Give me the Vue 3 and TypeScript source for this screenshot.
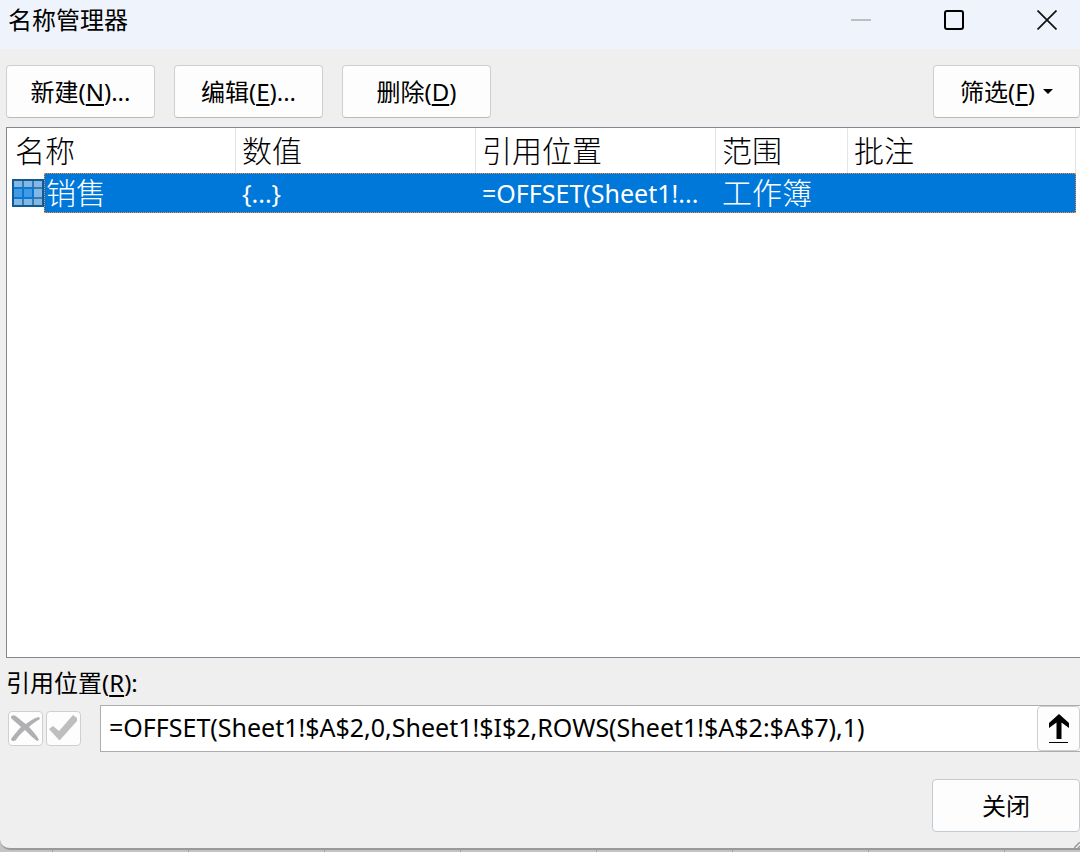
<script setup lang="ts">
import { ref } from 'vue'

interface DefinedName {
  name: string
  value: string
  refersTo: string
  scope: string
  comment: string
}

interface Action {
  label: string
  key: string
  tail: string
}

const actions: Action[] = [
  { label: '新建', key: 'N', tail: ')...' },
  { label: '编辑', key: 'E', tail: ')...' },
  { label: '删除', key: 'D', tail: ')' },
]

const names: DefinedName[] = [
  { name: '销售', value: '{...}', refersTo: '=OFFSET(Sheet1!...', scope: '工作簿', comment: '' },
]

const formula = ref('=OFFSET(Sheet1!$A$2,0,Sheet1!$I$2,ROWS(Sheet1!$A$2:$A$7),1)')
</script>

<template>
  <div class="desktop">
    <main class="dialog">
      <header class="titlebar">
        <h1>名称管理器</h1>
        <div class="window-controls">
          <button type="button" aria-label="最小化" disabled>
            <svg width="20" height="20" viewBox="0 0 20 20"><path d="M0 10H20" stroke="#bdbec1" stroke-width="2" /></svg>
          </button>
          <button type="button" aria-label="最大化">
            <svg width="20" height="20" viewBox="0 0 20 20"><rect x="1" y="1" width="18" height="18" rx="2" fill="none" stroke="#000" stroke-width="2" /></svg>
          </button>
          <button type="button" aria-label="关闭窗口">
            <svg width="20" height="20" viewBox="0 0 20 20"><path d="M0.500 0.500L19.500 19.500M19.500 0.500L0.500 19.500" stroke="#111" stroke-width="1.700" /></svg>
          </button>
        </div>
      </header>

      <div class="toolbar">
        <button v-for="a in actions" :key="a.key" type="button" class="btn">
          <span>{{ a.label }}(<u>{{ a.key }}</u>{{ a.tail }}</span>
        </button>
        <button type="button" class="btn filter">
          <span>筛选(<u>F</u>)</span>
          <svg width="10" height="5" viewBox="0 0 10 5"><path d="M0 0H10L5 5Z" fill="#000" /></svg>
        </button>
      </div>

      <div class="list">
        <table>
          <colgroup>
            <col class="c-icon" /><col class="c-name" /><col class="c-wide" /><col class="c-wide" /><col class="c-scope" /><col />
          </colgroup>
          <thead>
            <tr>
              <th colspan="2" scope="col">名称</th>
              <th scope="col">数值</th>
              <th scope="col">引用位置</th>
              <th scope="col">范围</th>
              <th scope="col">批注</th>
            </tr>
          </thead>
          <tbody>
            <tr v-for="n in names" :key="n.name">
              <td class="icon-cell">
                <svg width="32" height="28" viewBox="0 0 32 28">
                  <rect width="32" height="28" fill="#145a92" />
                  <rect x="2" y="2" width="30" height="24" fill="#3b78ac" />
                  <rect x="2" y="8" width="20" height="12" fill="#0878d2" />
                  <g fill="#82b8e8">
                    <rect x="2" y="2" width="8" height="6" /><rect x="12" y="2" width="8" height="6" /><rect x="22" y="2" width="8" height="6" />
                    <rect x="22" y="10" width="8" height="8" />
                    <rect x="2" y="20" width="8" height="6" /><rect x="12" y="20" width="8" height="6" /><rect x="22" y="20" width="8" height="6" />
                  </g>
                  <path d="M2 10H10V18H2ZM12 10H20V18H12Z" fill="#429be2" />
                  <path d="M31 0V28" stroke="#145a92" stroke-width="2" />
                </svg>
              </td>
              <td class="name">{{ n.name }}</td>
              <td class="latin">{{ n.value }}</td>
              <td class="latin">{{ n.refersTo }}</td>
              <td>{{ n.scope }}</td>
              <td>{{ n.comment }}</td>
            </tr>
          </tbody>
        </table>
      </div>

      <label class="ref-label" for="refers-to">引用位置(<u>R</u>):</label>
      <div class="ref-row">
        <button type="button" class="mini" aria-label="取消" disabled>
          <svg width="33" height="33" viewBox="0 0 33 33">
            <path d="M2 6C2 2 6 3 8 5C12 8 15 11 17 12C21 9 25 6 30 5L31 7C27 9 23 12 20 15C24 19 28 24 30 28L28 29C24 26 20 22 16 18C12 21 9 25 7 28C5 30 2 29 2 27C5 23 9 18 12 15C9 12 5 9 2 6Z" fill="#b0b0b2" />
          </svg>
        </button>
        <button type="button" class="mini" aria-label="输入" disabled>
          <svg width="33" height="33" viewBox="0 0 33 33">
            <path d="M2 17L6 14L12 19L26 3L30 6V9L13 28H12Z" fill="#bebec0" />
          </svg>
        </button>
        <div class="formula">
          <input id="refers-to" v-model="formula" type="text" spellcheck="false" />
          <button type="button" class="collapse" aria-label="折叠对话框">
            <svg width="20" height="30" viewBox="0 0 20 30">
              <path d="M10 0L20 9V14L12.500 8.500V25H7.500V8.500L0 14V9Z" fill="#000" />
              <path d="M0 28.500H19" stroke="#000" stroke-width="1" />
            </svg>
          </button>
        </div>
      </div>

      <footer>
        <button type="button" class="btn">关闭</button>
        <svg class="grip" width="6" height="6" viewBox="0 0 6 6"><path d="M0 6L6 0M4 6L6 4" stroke="#999" stroke-width="1.500" /></svg>
      </footer>
    </main>
    <div class="sheet-edge"></div>
  </div>
</template>

<style>
body {
  margin: 0;
}
</style>

<style scoped>
* {
  box-sizing: border-box;
}

.desktop {
  display: flex;
  flex-direction: column;
  min-height: 100vh;
  background: #c4c4c4;
  color: #000;
  font-family: "Noto Sans", "Noto Sans CJK SC", sans-serif;
  font-size: 24px;
  line-height: 32px;
}

.dialog {
  position: relative;
  z-index: 1;
  flex: 1;
  display: flex;
  flex-direction: column;
  background: #efefef;
  border-bottom: 2px solid #999;
  border-bottom-left-radius: 10px;
}

.sheet-edge {
  height: 2px;
  background: repeating-linear-gradient(90deg, #c4c4c4 0 52px, #a0a0a0 52px 53px, #c4c4c4 53px 136px);
}

button,
input {
  margin: 0;
  padding: 0;
  color: inherit;
  font: inherit;
}

svg {
  display: block;
  flex: none;
}

u {
  text-decoration-thickness: 2px;
  text-underline-offset: 3px;
}

.titlebar {
  display: flex;
  justify-content: space-between;
  height: 49px;
  padding: 4px 0 0 8px;
  background: #eff3fb;
}

h1 {
  margin: 0;
  font-size: 24px;
  font-weight: 400;
  line-height: 32px;
}

.window-controls {
  display: flex;
  gap: 27px;
}

.window-controls button {
  display: grid;
  place-items: center;
  width: 66px;
  height: 32px;
  border: 0;
  background: none;
}

.toolbar {
  display: flex;
  gap: 19px;
  padding: 16px 0 9px 6px;
}

.btn {
  display: flex;
  align-items: center;
  justify-content: center;
  width: 149px;
  height: 53px;
  border: 1px solid #cfcfcf;
  border-bottom-color: #bababa;
  border-radius: 4px;
  background: #fdfdfd;
}

.filter {
  gap: 8px;
  width: 147px;
  margin-left: auto;
}

.list {
  flex: 1;
  margin-left: 6px;
  padding-right: 4px;
  border: 1px solid #828790;
  border-right: 0;
  background: #fff;
}

table {
  width: 100%;
  table-layout: fixed;
  border-collapse: separate;
  border-spacing: 0;
  font-size: 30px;
  font-weight: 300;
  line-height: 38px;
}

.c-icon {
  width: 37px;
}

.c-name {
  width: 192px;
}

.c-wide {
  width: 240px;
}

.c-scope {
  width: 132px;
}

th {
  height: 45px;
  padding: 0 0 0 6px;
  border-right: 1px solid #e5e5e5;
  font-weight: 300;
  text-align: left;
}

th:first-child {
  padding-left: 8px;
}

td {
  height: 40px;
  padding: 0 0 0 6px;
  background:
    repeating-linear-gradient(90deg, #ff8728 0 1px, #0078d9 1px 2px) top / 100% 1px no-repeat,
    repeating-linear-gradient(90deg, #ff8728 0 1px, #0078d9 1px 2px) bottom / 100% 1px no-repeat,
    #0078d9;
  color: #fff;
  white-space: nowrap;
}

td:last-child {
  border-right: 1px dotted #ff8728;
}

td.icon-cell {
  padding: 0 0 0 5px;
  background: none;
}

td.name {
  padding-left: 1px;
  border-left: 1px dotted #ff8728;
}

td.latin {
  font-size: 25px;
  font-weight: 400;
}

.ref-label {
  padding: 9px 0 6px 6px;
}

.ref-row {
  display: flex;
  align-items: center;
  gap: 3px;
  padding-left: 8px;
}

.mini {
  display: grid;
  place-items: center;
  width: 35px;
  height: 35px;
  border: 1px solid #cfcfcf;
  border-radius: 4px;
  background: #fdfdfd;
}

.formula {
  flex: 1;
  display: flex;
  align-items: center;
  height: 47px;
  margin-left: 16px;
  border: 1px solid #abadb3;
  border-right: 0;
  background: #fff;
}

.formula input {
  flex: 1;
  min-width: 0;
  height: 45px;
  padding: 0 0 4px 8px;
  border: 0;
  outline: 0;
  background: transparent;
  font-size: 25px;
}

.collapse {
  display: grid;
  place-items: center;
  width: 43px;
  height: 45px;
  border: 1px solid #cfcfcf;
  border-radius: 4px;
  background: #fdfdfd;
}

footer {
  display: flex;
  justify-content: flex-end;
  position: relative;
  padding: 27px 0 16px;
}

footer .btn {
  width: 148px;
  border-color: #c3cbd2;
}

.grip {
  position: absolute;
  right: 0;
  bottom: 0;
}
</style>
